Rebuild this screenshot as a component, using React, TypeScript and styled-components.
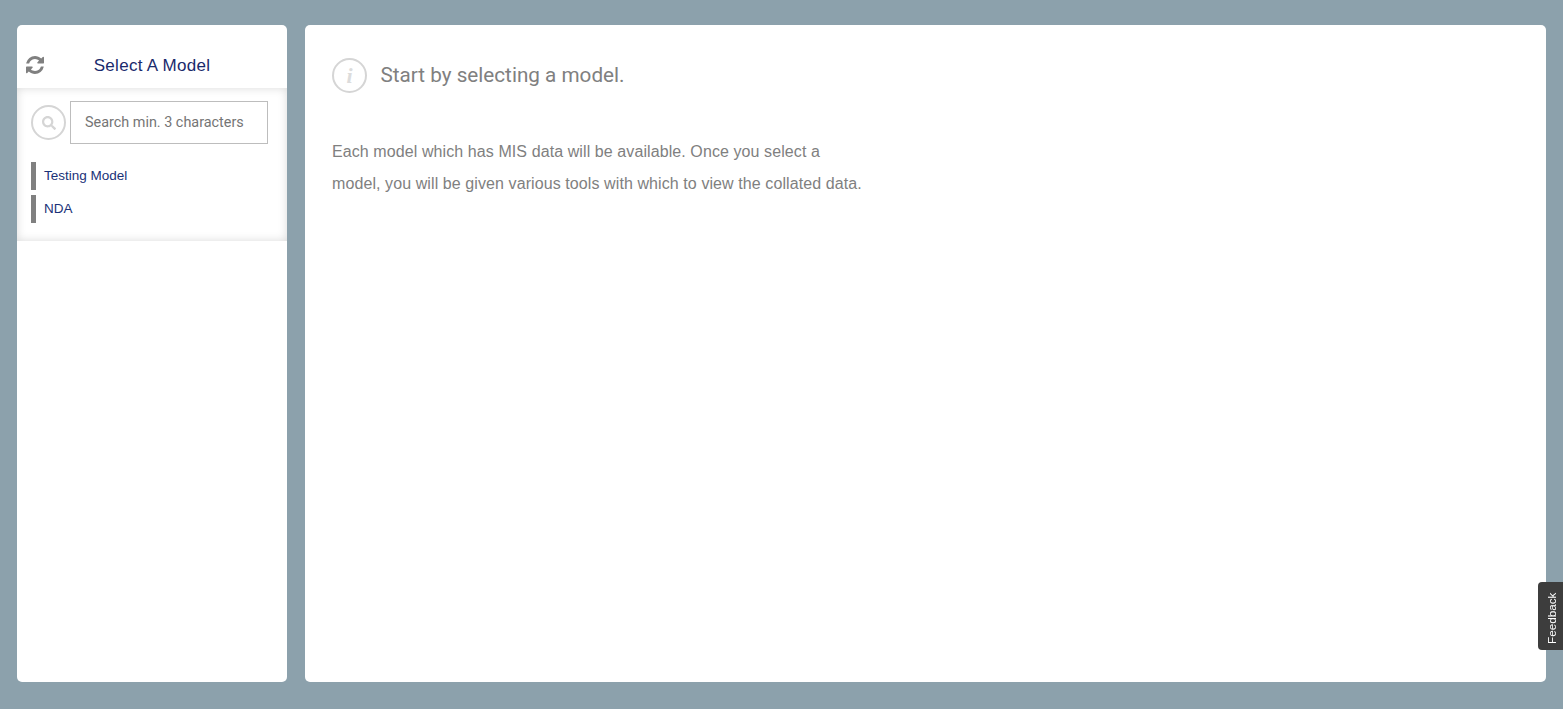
import styled, { createGlobalStyle } from "styled-components";
import { FaSearch } from "react-icons/fa";

const GlobalStyle = createGlobalStyle`
  html, body {
    margin: 0;
    padding: 0;
    height: 100%;
    background-color: #8ca1ac;
    overflow: hidden;
  }
  * {
    box-sizing: border-box;
  }
`;

const Page = styled.div`
  height: 709px;
  display: flex;
  gap: 18px;
  padding: 25px 17px 27px 17px;
`;

const Sidebar = styled.aside`
  width: 270px;
  flex-shrink: 0;
  background-color: #fff;
  border-radius: 5px;
  overflow: hidden;
`;

const SidebarHeader = styled.div`
  height: 63px;
  position: relative;
  display: flex;
  align-items: center;
  justify-content: center;
  padding-top: 19px;
`;

const RefreshButton = styled.svg`
  position: absolute;
  left: 9px;
  top: 31px;
  width: 18px;
  height: 18px;
  fill: #808080;
`;

const SidebarTitle = styled.h2`
  margin: 0;
  font-family: "Liberation Sans", Arial, sans-serif;
  font-size: 17px;
  font-weight: 400;
  letter-spacing: 0.3px;
  color: #1a2a6c;
`;

const SearchPanel = styled.div`
  height: 153px;
  padding: 13px 19px 0 14px;
  box-shadow: inset 0 0 10px rgba(0, 0, 0, 0.15);
`;

const SearchRow = styled.div`
  display: flex;
  align-items: center;
  gap: 4px;
`;

const CircleIcon = styled.span<{ $size: number }>`
  width: ${(props) => props.$size}px;
  height: ${(props) => props.$size}px;
  flex-shrink: 0;
  display: flex;
  align-items: center;
  justify-content: center;
  border: 2px solid #d5d5d5;
  border-radius: 50%;
  color: #d5d5d5;
`;

const SearchInput = styled.input`
  width: 198px;
  height: 43px;
  padding: 0 14px;
  border: 1px solid #bdbdbd;
  background-color: #fff;
  outline: none;
  font-family: Roboto, sans-serif;
  font-size: 14.4px;
  color: #757575;

  &::placeholder {
    color: #757575;
    opacity: 1;
  }
`;

const ModelList = styled.ul`
  list-style: none;
  margin: 18px 0 0;
  padding: 0;
  display: flex;
  flex-direction: column;
  gap: 5px;
`;

const ModelItem = styled.li`
  height: 28px;
  display: flex;
  align-items: center;
  padding: 0 0 2px 8px;
  border-left: 5px solid #808080;
  font-family: "Liberation Sans", Arial, sans-serif;
  font-size: 13.5px;
  color: #1a3278;
`;

const Main = styled.main`
  flex: 1;
  background-color: #fff;
  border-radius: 5px;
  padding: 33px 27px;
`;

const Notice = styled.div`
  display: flex;
  align-items: center;
  gap: 13.5px;
`;

const InfoGlyph = styled.span`
  font-family: "Liberation Serif", serif;
  font-style: italic;
  font-weight: 700;
  font-size: 22px;
  line-height: 1;
  color: #dcdcdc;
`;

const NoticeTitle = styled.h1`
  margin: 0 0 2px;
  font-family: Roboto, sans-serif;
  font-size: 20.7px;
  font-weight: 400;
  color: #808080;
`;

const Description = styled.p`
  width: 535px;
  margin: 43px 0 0;
  font-family: "Liberation Sans", Arial, sans-serif;
  font-size: 16px;
  line-height: 32px;
  letter-spacing: 0.09px;
  color: #808080;
`;

const FeedbackTab = styled.div`
  position: fixed;
  right: 0;
  top: 582px;
  width: 25px;
  height: 68px;
  display: flex;
  align-items: center;
  justify-content: center;
  padding: 0 2px 4px 0;
  background-color: #3d3d3d;
  border-radius: 0 4px 4px 0;
  writing-mode: vertical-rl;
  transform: rotate(180deg);
  font-family: "Liberation Sans", Arial, sans-serif;
  font-size: 11.7px;
  color: #fff;
`;

const App = () => {
  return (
    <>
      <GlobalStyle />
      <Page>
        <Sidebar>
          <SidebarHeader>
            <RefreshButton viewBox="0 128 1536 1536">
              <path d="M1511 1056q0 5-1 7-64 268-268 434.5t-478 166.5q-146 0-282.5-55t-243.5-157l-129 129q-19 19-45 19t-45-19-19-45v-448q0-26 19-45t45-19h448q26 0 45 19t19 45-19 45l-137 137q71 66 161 102t187 36q134 0 250-65t186-179q11-17 53-117 8-23 30-23h192q13 0 22.5 9.5t9.5 22.5zm25-800v448q0 26-19 45t-45 19h-448q-26 0-45-19t-19-45 19-45l138-138q-148-137-349-137-134 0-250 65t-186 179q-11 17-53 117-8 23-30 23h-199q-13 0-22.5-9.5t-9.5-22.5v-7q65-268 270-434.5t480-166.5q146 0 284 55.5t245 156.5l130-129q19-19 45-19t45 19 19 45z" />
            </RefreshButton>
            <SidebarTitle>Select A Model</SidebarTitle>
          </SidebarHeader>
          <SearchPanel>
            <SearchRow>
              <CircleIcon $size={35}>
                <FaSearch size={14} />
              </CircleIcon>
              <SearchInput placeholder="Search min. 3 characters" />
            </SearchRow>
            <ModelList>
              <ModelItem>Testing Model</ModelItem>
              <ModelItem>NDA</ModelItem>
            </ModelList>
          </SearchPanel>
        </Sidebar>
        <Main>
          <Notice>
            <CircleIcon $size={35}>
              <InfoGlyph>i</InfoGlyph>
            </CircleIcon>
            <NoticeTitle>Start by selecting a model.</NoticeTitle>
          </Notice>
          <Description>
            Each model which has MIS data will be available. Once you select a
            model, you will be given various tools with which to view the collated data.
          </Description>
        </Main>
      </Page>
      <FeedbackTab>Feedback</FeedbackTab>
    </>
  );
};

export default App;
